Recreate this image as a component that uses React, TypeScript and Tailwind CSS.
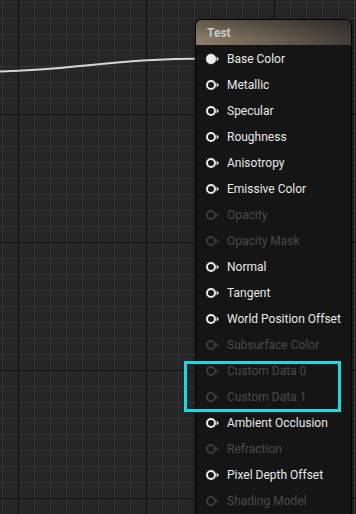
type Pin = { label: string; enabled: boolean; connected?: boolean };

const pins: Pin[] = [
  { label: "Base Color", enabled: true, connected: true },
  { label: "Metallic", enabled: true },
  { label: "Specular", enabled: true },
  { label: "Roughness", enabled: true },
  { label: "Anisotropy", enabled: true },
  { label: "Emissive Color", enabled: true },
  { label: "Opacity", enabled: false },
  { label: "Opacity Mask", enabled: false },
  { label: "Normal", enabled: true },
  { label: "Tangent", enabled: true },
  { label: "World Position Offset", enabled: true },
  { label: "Subsurface Color", enabled: false },
  { label: "Custom Data 0", enabled: false },
  { label: "Custom Data 1", enabled: false },
  { label: "Ambient Occlusion", enabled: true },
  { label: "Refraction", enabled: false },
  { label: "Pixel Depth Offset", enabled: true },
  { label: "Shading Model", enabled: false },
];

const W = 356;
const H = 514;

function Grid() {
  const xs = Array.from({ length: 23 }, (_, i) => 2 + i * 16);
  const ys = Array.from({ length: 33 }, (_, i) => 2 + i * 16);
  return (
    <svg className="absolute inset-0" width={W} height={H}>
      <rect width={W} height={H} fill="#262626" />
      {xs.map((x) => (
        <line key={"x" + x} x1={x + 0.5} y1={0} x2={x + 0.5} y2={H} stroke="#353535" strokeWidth={1} />
      ))}
      {ys.map((y) => (
        <line key={"y" + y} x1={0} y1={y + 0.5} x2={W} y2={y + 0.5} stroke={(y - 114) % 128 === 0 ? "#111111" : "#353535"} strokeWidth={1} />
      ))}
      {xs.filter((x) => (x - 18) % 128 === 0).map((x) => (
        <line key={"m" + x} x1={x + 0.5} y1={0} x2={x + 0.5} y2={H} stroke="#0f0f0f" strokeWidth={1} />
      ))}
      <path d="M -40 72 C 80 72 100 58.5 210 58.5" fill="none" stroke="#d6d6d6" strokeWidth={2} />
    </svg>
  );
}

function PinIcon({ enabled, connected }: { enabled: boolean; connected?: boolean }) {
  const color = enabled ? "#ececec" : "#3c3c3c";
  return (
    <svg width="14" height="12" viewBox="0 0 14 12" className="shrink-0">
      <circle cx="5" cy="6" r={connected ? 4.9 : 4} fill={connected ? color : "none"} stroke={color} strokeWidth={connected ? 0.6 : 2} />
      <path d="M10.6 3.6 L13 6 L10.6 8.4 Z" fill={color} />
    </svg>
  );
}

export default function App() {
  return (
    <div className="relative h-[514px] w-[356px] overflow-hidden bg-[#262626] font-['Roboto',sans-serif]">
      <Grid />

      <div className="absolute left-[195px] top-[19px] w-[157px] rounded-t-[6px] border border-black/80 bg-[#141414]/95 shadow-[0_0_3px_rgba(0,0,0,0.8)]">
        <div className="flex h-[25px] items-center rounded-t-[5px] bg-[linear-gradient(to_bottom,rgba(0,0,0,0.3),rgba(0,0,0,0)_75%),linear-gradient(to_right,#8c7c67,#6c6253_45%,#403c37)] pl-[11px] text-[12px] font-bold text-[#c8c8c8]">
          Test
        </div>
        <div className="flex flex-col pt-[1px] pb-[20px]">
          {pins.map((p) => (
            <div key={p.label} className="flex h-[26px] items-center gap-[7px] pl-[10px]">
              <PinIcon enabled={p.enabled} connected={p.connected} />
              <span className={`whitespace-nowrap text-[12px] ${p.enabled ? "text-[#e8e8e8]" : "text-[#4a4a4a]"}`}>{p.label}</span>
            </div>
          ))}
        </div>
      </div>

      <div className="absolute left-[184px] top-[361px] h-[51px] w-[157px] border-[3px] border-[#1cd9df]" />
    </div>
  );
}
